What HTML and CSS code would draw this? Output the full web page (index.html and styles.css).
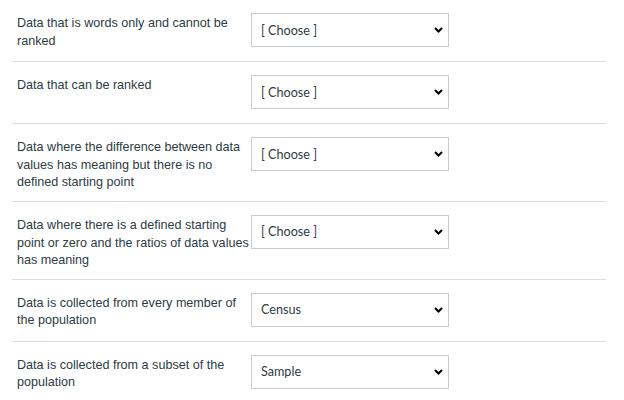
FILE: index.html
```html
<!DOCTYPE html>
<html>
<head>
<meta charset="utf-8">
<link rel="stylesheet" href="styles.css">
</head>
<body>
<div class="qlist">
  <div class="row">
    <div class="label">Data that is words only and cannot be ranked</div>
    <div class="pick"><select class="sel"><option>[ Choose ]</option></select><svg class="chev" viewBox="0 0 9 6" width="9" height="6"><polyline points="1,1 4.5,4.5 8,1" fill="none" stroke="#000" stroke-width="2"/></svg></div>
  </div>
  <div class="row">
    <div class="label">Data that can be ranked</div>
    <div class="pick"><select class="sel"><option>[ Choose ]</option></select><svg class="chev" viewBox="0 0 9 6" width="9" height="6"><polyline points="1,1 4.5,4.5 8,1" fill="none" stroke="#000" stroke-width="2"/></svg></div>
  </div>
  <div class="row">
    <div class="label">Data where the difference between data values has meaning but there is no defined starting point</div>
    <div class="pick"><select class="sel"><option>[ Choose ]</option></select><svg class="chev" viewBox="0 0 9 6" width="9" height="6"><polyline points="1,1 4.5,4.5 8,1" fill="none" stroke="#000" stroke-width="2"/></svg></div>
  </div>
  <div class="row">
    <div class="label">Data where there is a defined starting point or zero and the ratios of data values has meaning</div>
    <div class="pick"><select class="sel"><option>[ Choose ]</option></select><svg class="chev" viewBox="0 0 9 6" width="9" height="6"><polyline points="1,1 4.5,4.5 8,1" fill="none" stroke="#000" stroke-width="2"/></svg></div>
  </div>
  <div class="row">
    <div class="label">Data is collected from every member of the population</div>
    <div class="pick"><select class="sel"><option>Census</option></select><svg class="chev" viewBox="0 0 9 6" width="9" height="6"><polyline points="1,1 4.5,4.5 8,1" fill="none" stroke="#000" stroke-width="2"/></svg></div>
  </div>
  <div class="row">
    <div class="label">Data is collected from a subset of the population</div>
    <div class="pick"><select class="sel"><option>Sample</option></select><svg class="chev" viewBox="0 0 9 6" width="9" height="6"><polyline points="1,1 4.5,4.5 8,1" fill="none" stroke="#000" stroke-width="2"/></svg></div>
  </div>
</div>
</body>
</html>
```
FILE: styles.css
```css
html, body {
  margin: 0;
  padding: 0;
  background: #fff;
}
.qlist {
  margin: 0 0 0 12px;
  width: 594px;
}
.row {
  display: flex;
  align-items: flex-start;
  padding: 12px 0 9px 0;
  border-bottom: 1px solid #dcdcdc;
}
.label {
  flex: 0 0 239px;
  box-sizing: border-box;
  padding: 3px 0 0 5px;
  font-family: "Liberation Sans", Arial, sans-serif;
  font-size: 12.6px;
  line-height: 17.64px;
  color: #2d3b45;
}
.pick {
  position: relative;
  margin: 1px 0 5px 0;
  width: 198px;
  height: 34px;
}
.sel {
  appearance: none;
  -webkit-appearance: none;
  display: block;
  box-sizing: border-box;
  width: 198px;
  height: 34px;
  margin: 0;
  padding: 0 24px 0 9px;
  border: 1px solid #c7cdd1;
  border-radius: 0;
  background: #fff;
  font-family: Lato, "Liberation Sans", sans-serif;
  font-size: 12.6px;
  color: #2d3b45;
  outline: none;
}
.chev {
  position: absolute;
  right: 6px;
  top: 14px;
  pointer-events: none;
}
```
